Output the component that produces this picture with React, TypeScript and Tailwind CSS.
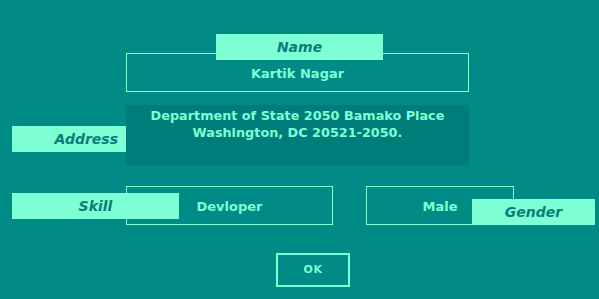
export default function App() {
  const font = { fontFamily: '"DejaVu Sans", "Liberation Sans", sans-serif' };
  return (
    <div
      className="w-[599px] h-[299px] bg-[#008b87] text-[#7fffd4] font-bold text-[13px] overflow-hidden flex flex-col"
      style={font}
    >
      {/* Name */}
      <div className="ml-[126px] mt-[34px] w-[343px] flex flex-col">
        <div className="relative z-10 ml-[90px] w-[167px] h-[26px] bg-[#7fffd4] text-[#0a7d78] italic text-[14px] flex items-center justify-center">
          Name
        </div>
        <div className="-mt-[7px] h-[39px] border border-[#7fffd4] flex items-center justify-center pt-[2px]">
          Kartik Nagar
        </div>
      </div>

      {/* Address */}
      <div className="mt-[13px] flex items-start">
        <div className="ml-[12px] mt-[21px] w-[114px] h-[26px] bg-[#7fffd4] text-[#0a7d78] italic text-[14px] flex items-center justify-end pr-[8px] pt-[1px]">
          Address
        </div>
        <div className="w-[343px] h-[60px] bg-[#007d7b] text-center text-[12.8px] leading-[17px] pt-[2px]">
          Department of State 2050 Bamako Place
          <br />
          Washington, DC 20521-2050.
        </div>
      </div>

      {/* Skill / Gender */}
      <div className="mt-[21px] flex items-start">
        <div className="relative z-10 ml-[12px] mt-[7px] w-[167px] h-[26px] bg-[#7fffd4] text-[#0a7d78] italic text-[14px] flex items-center justify-center">
          Skill
        </div>
        <div className="-ml-[53px] w-[207px] h-[39px] border border-[#7fffd4] flex items-center justify-center pt-[2px]">
          Devloper
        </div>
        <div className="ml-[33px] w-[148px] h-[39px] border border-[#7fffd4] flex items-center justify-center pt-[2px]">
          Male
        </div>
        <div className="relative z-10 -ml-[42px] mt-[13px] w-[123px] h-[26px] bg-[#7fffd4] text-[#0a7d78] italic text-[14px] flex items-center justify-center">
          Gender
        </div>
      </div>

      {/* OK */}
      <div className="mt-[28px] flex">
        <button className="ml-[276px] w-[74px] h-[34px] border-2 border-[#7fffd4] text-[11px] font-bold tracking-[0.5px] flex items-center justify-center">
          OK
        </button>
      </div>
    </div>
  );
}
